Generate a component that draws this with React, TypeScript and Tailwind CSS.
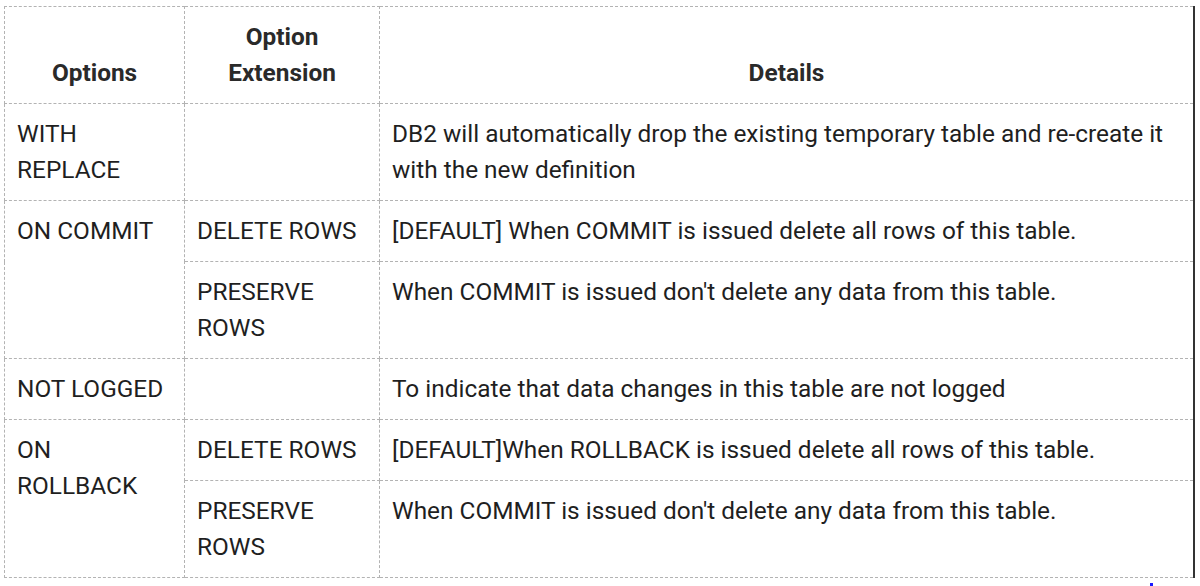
import React from "react";

type Row = {
  option?: string;
  span?: number;
  ext: string;
  details: string;
};

const rows: Row[] = [
  {
    option: "WITH REPLACE",
    ext: "",
    details:
      "DB2 will automatically drop the existing temporary table and re-create it with the new definition",
  },
  {
    option: "ON COMMIT",
    span: 2,
    ext: "DELETE ROWS",
    details: "[DEFAULT] When COMMIT is issued delete all rows of this table.",
  },
  {
    ext: "PRESERVE ROWS",
    details: "When COMMIT is issued don't delete any data from this table.",
  },
  {
    option: "NOT LOGGED",
    ext: "",
    details: "To indicate that data changes in this table are not logged",
  },
  {
    option: "ON ROLLBACK",
    span: 2,
    ext: "DELETE ROWS",
    details: "[DEFAULT]When ROLLBACK is issued delete all rows of this table.",
  },
  {
    ext: "PRESERVE ROWS",
    details: "When COMMIT is issued don't delete any data from this table.",
  },
];

const cell =
  "border border-dashed border-[#b3b3b3] px-3 py-3 align-top text-left font-normal";
const head =
  "border border-dashed border-[#b3b3b3] px-3 py-3 align-bottom text-center font-bold text-[#2a2a2a]";

export default function App() {
  return (
    <main className="relative w-[1200px] h-[586px] bg-white overflow-hidden pt-[6px] pl-1 font-['Roboto',sans-serif] text-[24.4px] leading-[36px] text-[#1f1f1f]">
      <table className="border-collapse table-fixed w-[1191px] border-r-2 border-r-[#333]">
        <colgroup>
          <col className="w-[180px]" />
          <col className="w-[195px]" />
          <col />
        </colgroup>
        <thead>
          <tr>
            <th className={head}>Options</th>
            <th className={head}>
              Option
              <br />
              Extension
            </th>
            <th className={head}>Details</th>
          </tr>
        </thead>
        <tbody>
          {rows.map((r, i) => (
            <tr key={i}>
              {r.option !== undefined && (
                <td className={cell} rowSpan={r.span ?? 1}>
                  {r.option === "WITH REPLACE" ? (
                    <>
                      WITH
                      <br />
                      REPLACE
                    </>
                  ) : r.option === "ON ROLLBACK" ? (
                    <>
                      ON
                      <br />
                      ROLLBACK
                    </>
                  ) : (
                    r.option
                  )}
                </td>
              )}
              <td className={cell}>
                {r.ext === "PRESERVE ROWS" ? (
                  <>
                    PRESERVE
                    <br />
                    ROWS
                  </>
                ) : (
                  r.ext
                )}
              </td>
              <td className={cell + " pr-6"}>{r.details}</td>
            </tr>
          ))}
        </tbody>
      </table>
      <span className="absolute left-[1150px] top-[583px] w-[3px] h-[3px] bg-[#1a1aff]" />
    </main>
  );
}
